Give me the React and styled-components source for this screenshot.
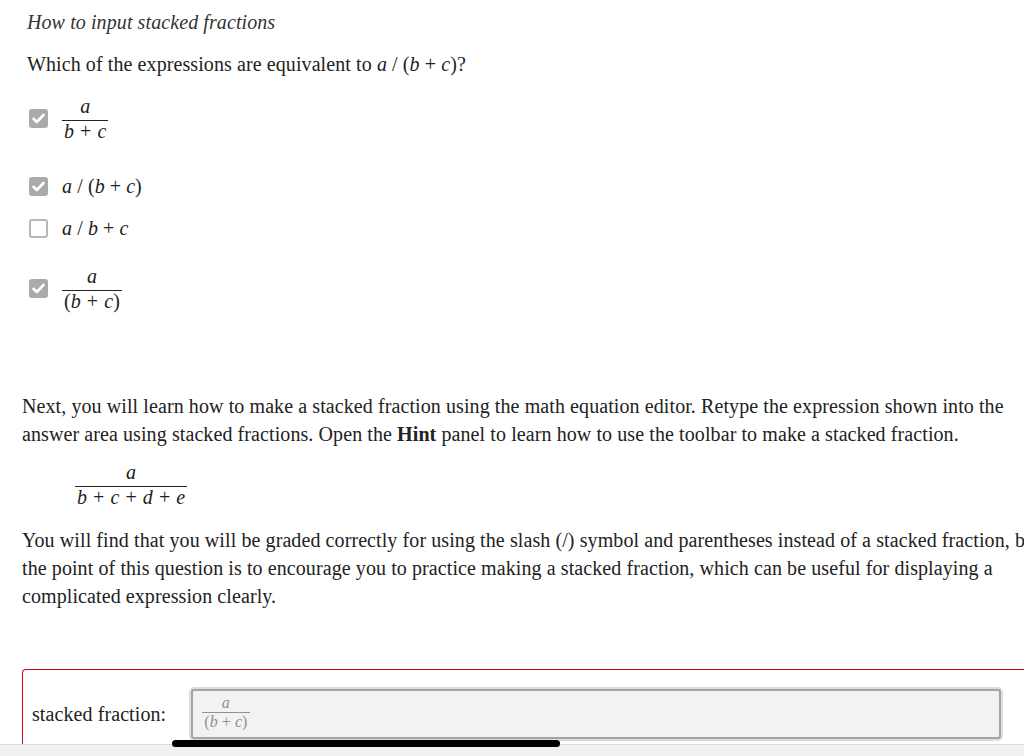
import React from 'react';
import styled, { createGlobalStyle } from 'styled-components';

const Global = createGlobalStyle`
  html, body { margin: 0; padding: 0; overflow: hidden; background: #fff; }
  body { font-family: "Liberation Serif", "Times New Roman", serif; color: #222; letter-spacing: 0.09px; }
`;

const Page = styled.div`
  width: 1032px;
  padding: 10px 0 0 22px;
`;

const Intro = styled.div`
  padding-left: 5px;
`;

const Title = styled.h2`
  margin: 0;
  font-size: 20px;
  line-height: 24px;
  font-weight: normal;
  font-style: italic;
  color: #333;
`;

const Question = styled.p`
  margin: 18px 0 0;
  font-size: 20px;
  line-height: 24px;
`;

const Var = styled.i`
  font-style: italic;
`;

const Op = styled.span`
  padding: 0 ${(p) => p.$pad ?? 6}px;
`;

const ChoiceList = styled.div`
  margin-top: 20px;
  display: flex;
  flex-direction: column;
  gap: 18px;
`;

const Choice = styled.label`
  display: flex;
  align-items: center;
  gap: 14px;
  margin-top: ${(p) => p.$extra || 0}px;
  font-size: 20px;
  line-height: 24px;
`;

const Box = styled.span`
  flex: none;
  width: 19px;
  height: 19px;
  margin-left: 2px;
  box-sizing: border-box;
  border-radius: 3px;
  display: flex;
  align-items: center;
  justify-content: center;
  background: ${(p) => (p.$checked ? '#aaaaaa' : '#fff')};
  border: ${(p) => (p.$checked ? 'none' : '2px solid #b8b8b8')};
`;

const Frac = styled.span`
  display: inline-flex;
  flex-direction: column;
  align-items: stretch;
  text-align: center;
  font-size: ${(p) => p.$size || 20}px;
  color: ${(p) => p.$color || 'inherit'};
  margin-left: ${(p) => p.$indent || 0}px;
`;

const Num = styled.span`
  line-height: ${(p) => p.$lh || 20}px;
  padding-bottom: ${(p) => p.$gap ?? 4}px;
`;

const Bar = styled.span`
  height: 1px;
  background: ${(p) => p.$color || '#222'};
`;

const Den = styled.span`
  line-height: ${(p) => p.$lh || 20}px;
  padding: 0 2px;
`;

const Para = styled.p`
  margin: ${(p) => p.$top || 0}px 0 0;
  font-size: 20px;
  line-height: 28px;
`;

const DisplayMath = styled.div`
  margin-top: 14px;
  display: flex;
`;

const AnswerBox = styled.div`
  margin-top: 59px;
  width: 1060px;
  border: 1px solid #d0021b;
  border-bottom: none;
  border-top-left-radius: 4px;
  padding: 19px 0 30px 9px;
  display: flex;
  align-items: center;
  gap: 25px;
`;

const Label = styled.span`
  font-size: 20px;
  line-height: 24px;
`;

const Input = styled.div`
  width: 810px;
  height: 50px;
  box-sizing: border-box;
  background: #f2f2f2;
  border: 2px solid #a4a4a4;
  border-radius: 3px;
  box-shadow: 0 0 0 2px #dedede;
  padding: 4px 0 0 9px;
  display: flex;
  align-items: flex-start;
`;

const Track = styled.div`
  position: fixed;
  left: 0;
  right: 0;
  bottom: 0;
  height: 11px;
  background: #f1f1f1;
  border-top: 1px solid #dadada;
`;

const Thumb = styled.div`
  position: fixed;
  left: 172px;
  width: 388px;
  bottom: 9px;
  height: 7px;
  border-radius: 4px;
  background: #000;
`;

const Check = () => (
  <svg width="13" height="11" viewBox="0 0 13 11">
    <path d="M1.5 5.8 L4.8 9 L11.5 2" fill="none" stroke="#fff" strokeWidth="2.6" strokeLinecap="round" strokeLinejoin="round" />
  </svg>
);

const Plus = () => <Op>+</Op>;

export default function App() {
  return (
    <>
      <Global />
      <Page>
        <Intro>
          <Title>How to input stacked fractions</Title>
          <Question>
            Which of the expressions are equivalent to <Var>a</Var> / (<Var>b</Var> + <Var>c</Var>)?
          </Question>
          <ChoiceList>
            <Choice>
              <Box $checked><Check /></Box>
              <Frac>
                <Num><Var>a</Var></Num>
                <Bar />
                <Den><Var>b</Var><Plus /><Var>c</Var></Den>
              </Frac>
            </Choice>
            <Choice $extra={15}>
              <Box $checked><Check /></Box>
              <span>
                <Var>a</Var> / (<Var>b</Var><Op $pad={5}>+</Op><Var>c</Var>)
              </span>
            </Choice>
            <Choice>
              <Box />
              <span>
                <Var>a</Var> / <Var>b</Var><Op $pad={5}>+</Op><Var>c</Var>
              </span>
            </Choice>
            <Choice $extra={8}>
              <Box $checked><Check /></Box>
              <Frac>
                <Num><Var>a</Var></Num>
                <Bar />
                <Den>(<Var>b</Var><Plus /><Var>c</Var>)</Den>
              </Frac>
            </Choice>
          </ChoiceList>
        </Intro>

        <Para $top={81}>
          Next, you will learn how to make a stacked fraction using the math equation editor. Retype the expression shown into the answer area using stacked fractions. Open the <b>Hint</b> panel to learn how to use the toolbar to make a stacked fraction.
        </Para>

        <DisplayMath>
          <Frac $indent={53}>
            <Num><Var>a</Var></Num>
            <Bar />
            <Den>
              <Var>b</Var><Plus /><Var>c</Var><Plus /><Var>d</Var><Plus /><Var>e</Var>
            </Den>
          </Frac>
        </DisplayMath>

        <Para $top={19}>
          You will find that you will be graded correctly for using the slash (/) symbol and parentheses instead of a stacked fraction, but the point of this question is to encourage you to practice making a stacked fraction, which can be useful for displaying a complicated expression clearly.
        </Para>

        <AnswerBox>
          <Label>stacked fraction:</Label>
          <Input>
            <Frac $size={16} $color="#909090">
              <Num $lh={16} $gap={1}><Var>a</Var></Num>
              <Bar $color="#909090" />
              <Den $lh={18}>
                (<Var>b</Var><Op $pad={4}>+</Op><Var>c</Var>)
              </Den>
            </Frac>
          </Input>
        </AnswerBox>
      </Page>
      <Track />
      <Thumb />
    </>
  );
}
